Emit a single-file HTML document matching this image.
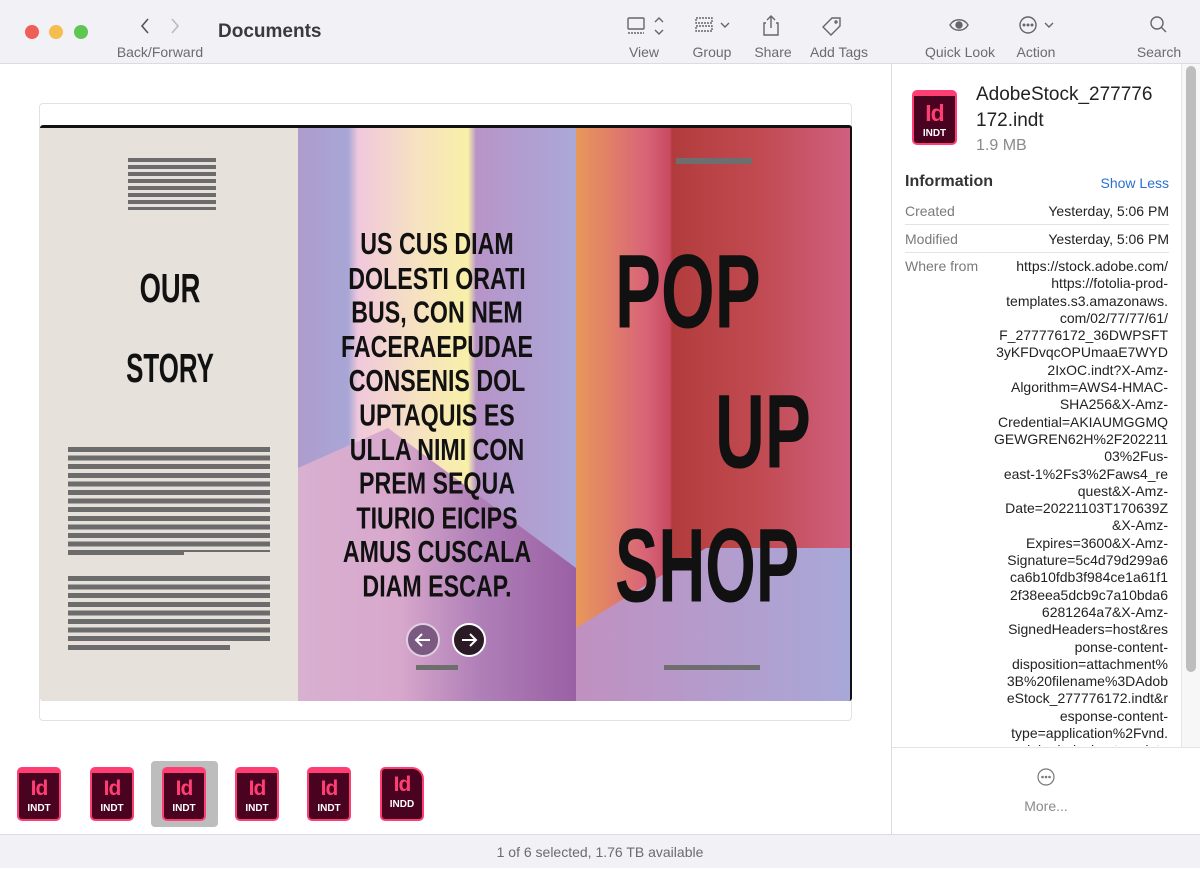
<!DOCTYPE html>
<html><head><meta charset="utf-8"><style>
*{margin:0;padding:0;box-sizing:border-box}
body{width:1200px;height:868px;overflow:hidden;font-family:"Liberation Sans",sans-serif;background:#fff;position:relative}
.abs{position:absolute}
.tb{left:0;top:0;width:1200px;height:64px;background:#f2f1f5;border-bottom:1px solid #dcdbe0}
.lbl{font-size:14px;color:#6b6b70;top:44px;text-align:center}
.dot{width:14px;height:14px;border-radius:50%;top:25px}
.status{left:0;top:834px;width:1200px;height:34px;background:#f2f1f5;border-top:1px solid #dcdbe0;font-size:14px;color:#6b6b70;text-align:center;line-height:34px}
.side{left:891px;top:64px;width:309px;height:770px;border-left:1px solid #dcdbe0;background:#fff}
.icon{width:44px;height:54px;border-radius:5px;background:#49021f;border:2px solid #ff3f73;border-top-width:6px}
.icon b{position:absolute;left:0;right:0;top:4px;text-align:center;color:#ff3f73;font-size:21px;font-weight:bold;letter-spacing:-1px}
.icon i{position:absolute;left:0;right:0;top:30px;text-align:center;color:#fff;font-size:10px;font-style:normal;font-weight:bold}
.row{left:905px;width:264px;font-size:14px;height:28px;border-bottom:1px solid #e3e3e6;line-height:28px}
.row span:first-child{color:#7a7a7e}
.row span:last-child{float:right;color:#222}
.wf{right:32px;top:258px;width:200px;text-align:right;font-size:14px;line-height:17.3px;color:#222}
.cond{font-family:"Liberation Sans",sans-serif;font-weight:bold;color:#111;white-space:nowrap}
.lines{background:repeating-linear-gradient(#6c6c6c 0 5px,#e6e1da 5px 8.6px)}
</style></head><body>
<div class="abs tb"></div>
<div class="abs dot" style="left:25px;background:#ed5f57"></div>
<div class="abs dot" style="left:49px;background:#f4bd4f"></div>
<div class="abs dot" style="left:74px;background:#5fc553"></div>
<svg class="abs" style="left:136px;top:16px" width="50" height="20"><path d="M12 3 L6 10 L12 17" fill="none" stroke="#555" stroke-width="1.6"/><path d="M36 3 L42 10 L36 17" fill="none" stroke="#bbb" stroke-width="1.6"/></svg>
<div class="abs lbl" style="left:110px;width:100px">Back/Forward</div>
<div class="abs" style="left:218px;top:21px;font-size:19px;font-weight:bold;color:#3a3a3d">Documents</div>
<svg class="abs" style="left:620px;top:14px" width="560" height="26" fill="none" stroke="#666" stroke-width="1.4">
<rect x="8" y="4" width="16" height="11" rx="1"/><path d="M8 19h16" stroke-dasharray="2 1"/><path d="M35 8l4-4 4 4M35 16l4 4 4-4"/>
<rect x="76" y="4" width="16" height="5" stroke-dasharray="2 1"/><rect x="76" y="12" width="16" height="5" stroke-dasharray="2 1"/><path d="M101 9l4 4 4-4"/>
<path d="M146 9h-2v12h14V9h-2M151 2v12M147 6l4-4 4 4"/>
<path d="M212 4h8v8l-9 9-8-8z"/><circle cx="216" cy="8" r="1"/>
<path d="M330 11c4-7 14-7 18 0c-4 7-14 7-18 0z"/><circle cx="339" cy="11" r="3" fill="#666"/>
<circle cx="408" cy="11" r="8"/><circle cx="404" cy="11" r=".8" fill="#666"/><circle cx="408" cy="11" r=".8" fill="#666"/><circle cx="412" cy="11" r=".8" fill="#666"/><path d="M425 9l4 4 4-4"/>
<circle cx="537" cy="9" r="6"/><path d="M541 13l5 5"/>
</svg>
<div class="abs lbl" style="left:620px;width:48px">View</div>
<div class="abs lbl" style="left:686px;width:52px">Group</div>
<div class="abs lbl" style="left:750px;width:46px">Share</div>
<div class="abs lbl" style="left:806px;width:66px">Add Tags</div>
<div class="abs lbl" style="left:920px;width:80px">Quick Look</div>
<div class="abs lbl" style="left:1010px;width:52px">Action</div>
<div class="abs lbl" style="left:1130px;width:58px">Search</div>

<!-- preview -->
<div class="abs" style="left:39px;top:103px;width:813px;height:618px;border:1px solid #e2e2e5;border-radius:4px;background:#fff"></div>
<div class="abs" style="left:40px;top:125px;width:812px;height:576px;border-top:3px solid #111;border-right:2px solid #111;border-radius:3px;overflow:hidden;background:#e6e1da">
 <div class="abs" style="left:88px;top:30px;width:88px;height:52px;background:repeating-linear-gradient(#6c6c6c 0 4px,#e6e1da 4px 7px)"></div>
 <div class="abs cond" style="left:0;top:140px;width:260px;text-align:center;font-size:37px;transform:scale(0.74,1.1)">OUR</div>
 <div class="abs cond" style="left:0;top:220px;width:260px;text-align:center;font-size:37px;transform:scale(0.7,1.1)">STORY</div>
 <div class="abs lines" style="left:28px;top:319px;width:202px;height:112px"></div>
 <div class="abs" style="left:144px;top:424px;width:90px;height:8px;background:#e6e1da"></div>
 <div class="abs lines" style="left:28px;top:448px;width:202px;height:76px"></div>
 <div class="abs" style="left:190px;top:516px;width:40px;height:8px;background:#e6e1da"></div>
 <div class="abs" style="left:258px;top:0;width:278px;height:576px;background:linear-gradient(90deg,#ad9ccc 0,#a8a6d6 50px,#f0c8dc 60px,#f6e2c0 120px,#f8f0a8 170px,#b894c8 178px,#aaa8d8 278px)"></div>
 <div class="abs" style="left:258px;top:300px;width:278px;height:276px;background:linear-gradient(90deg,#d8b0d0,#d8a8cc 100px,#b080b8 180px,#9a60a4 278px);clip-path:polygon(0 40px,90px 0,278px 140px,278px 276px,0 276px)"></div>
 <div class="abs cond" style="left:258px;top:100px;width:278px;text-align:center;font-size:29px;line-height:32.6px;transform:scale(0.8,1.05);transform-origin:center top">US CUS DIAM<br>DOLESTI ORATI<br>BUS, CON NEM<br>FACERAEPUDAE<br>CONSENIS DOL<br>UPTAQUIS ES<br>ULLA NIMI CON<br>PREM SEQUA<br>TIURIO EICIPS<br>AMUS CUSCALA<br>DIAM ESCAP.</div>
 <div class="abs" style="left:536px;top:0;width:276px;height:576px;background:linear-gradient(90deg,#e8985a,#d86478 70px,#c84a60 94px,#b23c3c 96px,#c04a50 180px,#d06080 276px)"></div>
 <div class="abs" style="left:536px;top:420px;width:276px;height:156px;background:linear-gradient(90deg,#c090c0,#a8a8d8);clip-path:polygon(0 80px,130px 0,276px 0,276px 156px,0 156px)"></div>
 <div class="abs" style="left:636px;top:30px;width:76px;height:6px;background:#6e6e6e"></div>
 <div class="abs cond" style="left:575px;top:106px;font-size:100px;line-height:110px;transform:scale(0.69,1.05);transform-origin:left top">POP</div>
 <div class="abs cond" style="left:675px;top:246px;font-size:100px;line-height:110px;transform:scale(0.69,1.05);transform-origin:left top">UP</div>
 <div class="abs cond" style="left:575px;top:380px;font-size:100px;line-height:110px;transform:scale(0.65,1.05);transform-origin:left top">SHOP</div>
 <div class="abs" style="left:624px;top:537px;width:96px;height:5px;background:#6e6e6e"></div>
 <div class="abs" style="left:376px;top:537px;width:42px;height:5px;background:#6e6e6e"></div>
 <div class="abs" style="left:366px;top:495px;width:34px;height:34px;border-radius:50%;background:#7a5a80;border:2px solid #e0d0e4"></div>
 <div class="abs" style="left:412px;top:495px;width:34px;height:34px;border-radius:50%;background:#2a1a26;border:2px solid #fff"></div>
 <svg class="abs" style="left:366px;top:495px" width="80" height="34" fill="none" stroke="#fff" stroke-width="2"><path d="M10 17h14M16 11l-6 6 6 6"/><path d="M56 17h14M64 11l6 6-6 6"/></svg>
</div>

<!-- thumbnails -->
<div class="abs" style="left:151px;top:761px;width:67px;height:66px;border-radius:4px;background:#bdbdbd"></div>
<div class="abs icon" style="left:17px;top:767px"><b>Id</b><i>INDT</i></div>
<div class="abs icon" style="left:90px;top:767px"><b>Id</b><i>INDT</i></div>
<div class="abs icon" style="left:162px;top:767px"><b>Id</b><i>INDT</i></div>
<div class="abs icon" style="left:235px;top:767px"><b>Id</b><i>INDT</i></div>
<div class="abs icon" style="left:307px;top:767px"><b>Id</b><i>INDT</i></div>
<div class="abs icon" style="left:380px;top:767px;border-top-width:2px;border-top-right-radius:12px"><b>Id</b><i>INDD</i></div>

<!-- sidebar -->
<div class="abs side"></div>
<div class="abs" style="left:1181px;top:64px;width:19px;height:684px;background:#f7f7f7;border-left:1px solid #e6e6e6"></div>
<div class="abs" style="left:1186px;top:66px;width:10px;height:606px;border-radius:5px;background:#bdbdbd"></div>
<div class="abs icon" style="left:912px;top:90px;width:45px;height:55px"><b style="font-size:23px">Id</b><i style="top:32px">INDT</i></div>
<div class="abs" style="left:976px;top:82px;font-size:19px;line-height:26px;color:#222">AdobeStock_277776<br>172.indt</div>
<div class="abs" style="left:976px;top:137px;font-size:16px;color:#8a8a8e">1.9 MB</div>
<div class="abs" style="left:905px;top:173px;font-size:16px;font-weight:bold;color:#333">Information</div>
<div class="abs" style="left:1060px;top:175px;width:109px;text-align:right;font-size:14px;color:#2a6fd0">Show Less</div>
<div class="abs row" style="top:197px"><span>Created</span><span>Yesterday, 5:06 PM</span></div>
<div class="abs row" style="top:225px"><span>Modified</span><span>Yesterday, 5:06 PM</span></div>
<div class="abs" style="left:905px;top:258px;font-size:14px;line-height:17.3px;color:#7a7a7e">Where from</div>
<div class="abs" style="left:891px;top:258px;width:290px;height:488px;overflow:hidden">
<div class="abs wf" style="top:0;right:13px">https://stock.adobe.com/<br>https://fotolia-prod-<br>templates.s3.amazonaws.<br>com/02/77/77/61/<br>F_277776172_36DWPSFT<br>3yKFDvqcOPUmaaE7WYD<br>2IxOC.indt?X-Amz-<br>Algorithm=AWS4-HMAC-<br>SHA256&amp;X-Amz-<br>Credential=AKIAUMGGMQ<br>GEWGREN62H%2F202211<br>03%2Fus-<br>east-1%2Fs3%2Faws4_re<br>quest&amp;X-Amz-<br>Date=20221103T170639Z<br>&amp;X-Amz-<br>Expires=3600&amp;X-Amz-<br>Signature=5c4d79d299a6<br>ca6b10fdb3f984ce1a61f1<br>2f38eea5dcb9c7a10bda6<br>6281264a7&amp;X-Amz-<br>SignedHeaders=host&amp;res<br>ponse-content-<br>disposition=attachment%<br>3B%20filename%3DAdob<br>eStock_277776172.indt&amp;r<br>esponse-content-<br>type=application%2Fvnd.<br>adobe.indesign-template</div></div>
<div class="abs" style="left:892px;top:747px;width:308px;height:1px;background:#e3e3e6"></div>
<svg class="abs" style="left:1036px;top:767px" width="20" height="20" fill="none" stroke="#777" stroke-width="1.2"><circle cx="10" cy="10" r="8"/><circle cx="6.5" cy="10" r=".7" fill="#777"/><circle cx="10" cy="10" r=".7" fill="#777"/><circle cx="13.5" cy="10" r=".7" fill="#777"/></svg>
<div class="abs" style="left:1000px;top:798px;width:92px;text-align:center;font-size:14px;color:#8a8a8e">More...</div>

<div class="abs status">1 of 6 selected, 1.76 TB available</div>
</body></html>
